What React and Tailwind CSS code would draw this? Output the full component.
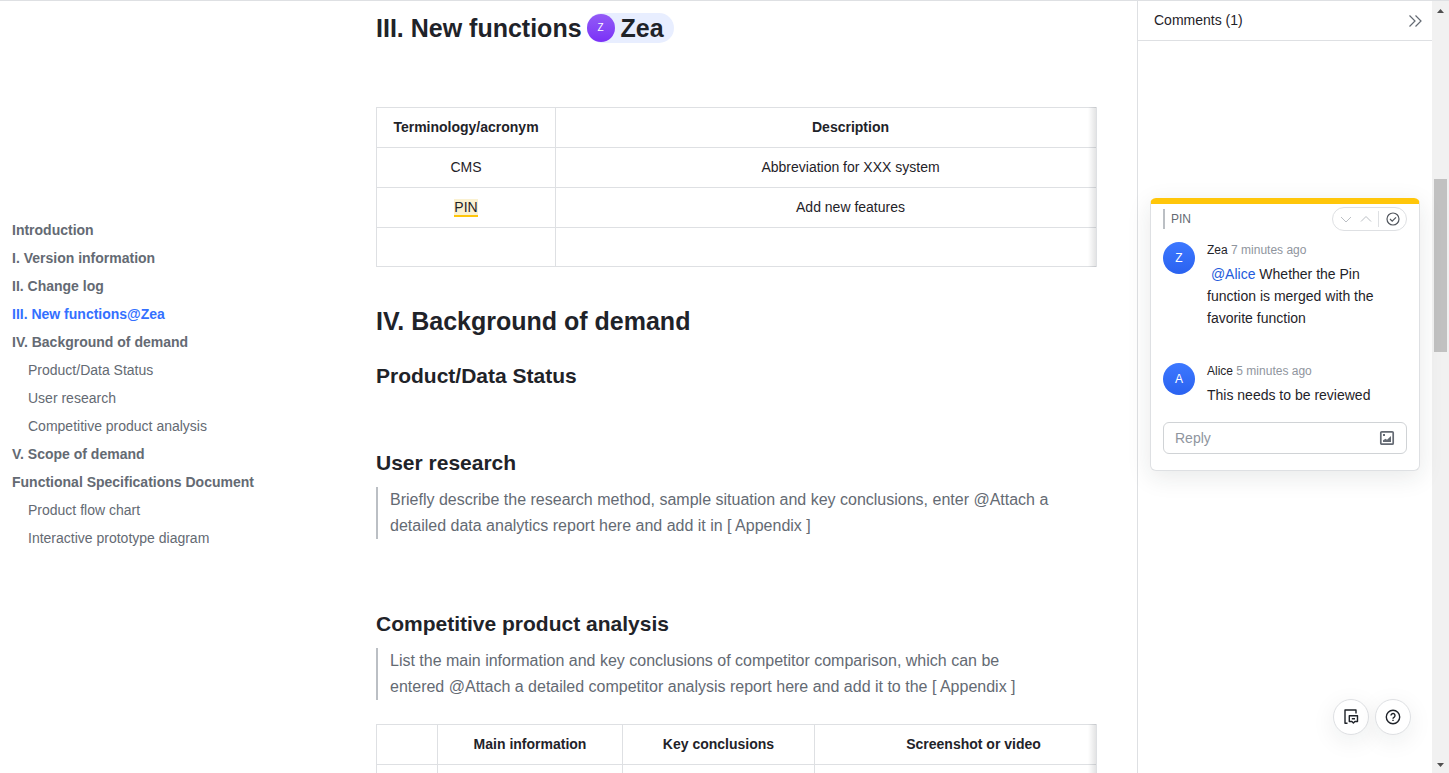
import React from 'react';
import clsx from 'clsx';

const OUTLINE = [
  { label: 'Introduction', level: 1 },
  { label: 'I. Version information', level: 1 },
  { label: 'II. Change log', level: 1 },
  { label: 'III. New functions@Zea', level: 1, active: true },
  { label: 'IV. Background of demand', level: 1 },
  { label: 'Product/Data Status', level: 2 },
  { label: 'User research', level: 2 },
  { label: 'Competitive product analysis', level: 2 },
  { label: 'V. Scope of demand', level: 1 },
  { label: 'Functional Specifications Document', level: 1 },
  { label: 'Product flow chart', level: 2 },
  { label: 'Interactive prototype diagram', level: 2 },
];

const Outline = () => (
  <nav aria-label="Outline" className="w-[376px] shrink-0 flex flex-col justify-center pb-1.5 pl-3">
    {OUTLINE.map(({ label, level, active }) => (
      <a
        key={label}
        href="#"
        className={clsx(
          'text-sm leading-7',
          level === 1 ? 'font-bold' : 'pl-4',
          active ? 'text-[#3370ff]' : 'text-[#646a73]'
        )}
      >
        {label}
      </a>
    ))}
  </nav>
);

/* Wide table that is cut off by the document column, with a fade on the right */
const WideTable = ({ children, className }) => (
  <div className={clsx('relative overflow-hidden border-r border-[#dee0e3]', className)}>
    {children}
    <div className="absolute inset-y-0 right-0 w-2 bg-linear-to-r from-transparent to-[#1f232920]" />
  </div>
);

const cell = 'h-10 border border-[#dee0e3] p-0 pb-0.5 text-center text-sm';
const lastCell = 'h-[39px] border border-[#dee0e3] p-0';

const TermTable = () => (
  <WideTable className="mt-[61px]">
    <table className="w-[770px] table-fixed border-collapse">
      <colgroup>
        <col className="w-[179px]" />
        <col />
      </colgroup>
      <thead>
        <tr>
          <th className={cell}>Terminology/acronym</th>
          <th className={cell}>Description</th>
        </tr>
      </thead>
      <tbody>
        <tr>
          <td className={cell}>CMS</td>
          <td className={cell}>Abbreviation for XXX system</td>
        </tr>
        <tr>
          <td className={cell}>
            <span className="border-b-2 border-[#ffc60a] bg-[#faf1d1]">PIN</span>
          </td>
          <td className={cell}>Add new features</td>
        </tr>
        <tr>
          <td className={lastCell}></td>
          <td className={lastCell}></td>
        </tr>
      </tbody>
    </table>
  </WideTable>
);

const CompetitorTable = () => (
  <WideTable className="mt-6">
    <table className="w-[757px] table-fixed border-collapse">
      <colgroup>
        <col className="w-[61px]" />
        <col className="w-[185px]" />
        <col className="w-[192px]" />
        <col />
      </colgroup>
      <thead>
        <tr>
          <th className={cell}></th>
          <th className={cell}>Main information</th>
          <th className={cell}>Key conclusions</th>
          <th className={cell}>Screenshot or video</th>
        </tr>
      </thead>
      <tbody>
        <tr>
          <td className={cell}></td>
          <td className={cell}></td>
          <td className={cell}></td>
          <td className={cell}></td>
        </tr>
      </tbody>
    </table>
  </WideTable>
);

const Quote = ({ children }) => (
  <blockquote className="mt-2 border-l-2 border-[#bbbfc4] pl-3 text-base leading-[26px] text-[#646a73]">
    {children}
  </blockquote>
);

const Document = () => (
  <main className="min-w-0 flex-1 overflow-hidden pr-10">
    <h1 className="mt-[9px] flex items-center text-[25px] leading-9 font-bold">
      III. New functions
      <a href="#" className="ml-[5px] flex h-[30px] items-center rounded-full bg-[#e8eeff] pr-2.5">
        <span className="mr-1.5 flex size-7 items-center justify-center rounded-full bg-linear-to-b from-[#935af6] to-[#7b2ff7] text-[10px] font-normal text-white">
          Z
        </span>
        Zea
      </a>
    </h1>
    <TermTable />
    <h1 className="mt-9 text-[25px] leading-9 font-bold">IV. Background of demand</h1>
    <h2 className="mt-[21px] text-[21px] leading-8 font-bold">Product/Data Status</h2>
    <h2 className="mt-[55px] text-[21px] leading-8 font-bold">User research</h2>
    <Quote>
      Briefly describe the research method, sample situation and key conclusions, enter @Attach a
      <br />
      detailed data analytics report here and add it in [ Appendix ]
    </Quote>
    <h2 className="mt-[69px] text-[21px] leading-8 font-bold">Competitive product analysis</h2>
    <Quote>
      List the main information and key conclusions of competitor comparison, which can be
      <br />
      entered @Attach a detailed competitor analysis report here and add it to the [ Appendix ]
    </Quote>
    <CompetitorTable />
  </main>
);

const Comment = ({ name, time, className, children }) => (
  <div className={clsx('flex gap-3', className)}>
    <div className="mt-0.5 flex size-8 shrink-0 items-center justify-center rounded-full bg-linear-to-b from-[#3d78ff] to-[#2a62f0] text-xs text-white">
      {name[0]}
    </div>
    <div>
      <div className="text-xs leading-5">
        {name} <span className="text-[#8f959e]">{time}</span>
      </div>
      <p className="mt-[3px] text-sm leading-[22px]">{children}</p>
    </div>
  </div>
);

const CommentCard = () => (
  <section className="mx-3 mt-[157px] rounded-md border border-t-6 border-[#dee0e3] border-t-[#ffc60a] bg-white px-3 pt-[3px] pb-4 shadow-[0_6px_24px_rgba(31,35,41,0.10)]">
    <div className="flex items-center justify-between">
      <div className="border-l-2 border-[#bbbfc4] pl-1.5 text-xs leading-5 text-[#646a73]">PIN</div>
      <div className="flex h-6 items-center rounded-full border border-[#dee0e3] pr-[5px] pl-[7px]">
        <button aria-label="Next comment" className="text-[#bbbfc4]">
          <svg className="h-3 w-3" viewBox="0 0 12 12" fill="none" stroke="currentColor">
            <path d="M1 4l5 5 5-5" />
          </svg>
        </button>
        <button aria-label="Previous comment" className="ml-2 text-[#bbbfc4]">
          <svg className="h-3 w-3" viewBox="0 0 12 12" fill="none" stroke="currentColor">
            <path d="M1 8.500l5-5 5 5" />
          </svg>
        </button>
        <span className="mx-1.5 h-4 border-l border-[#dee0e3]" />
        <button aria-label="Resolve" className="text-[#51565d]">
          <svg className="size-4" viewBox="0 0 16 16" fill="none" stroke="currentColor" strokeWidth="1.2">
            <circle cx="8" cy="8" r="6" />
            <path d="M5 8l2.200 2.200L11 6.300" />
          </svg>
        </button>
      </div>
    </div>
    <Comment name="Zea" time="7 minutes ago" className="mt-[9px]">
      &nbsp;<a href="#" className="text-[#245bdb]">@Alice</a> Whether the Pin
      <br />
      function is merged with the
      <br />
      favorite function
    </Comment>
    <Comment name="Alice" time="5 minutes ago" className="mt-8">
      This needs to be reviewed
    </Comment>
    <div className="mt-4 flex h-8 items-center rounded-md border border-[#d0d3d6] px-[11px]">
      <input
        type="text"
        aria-label="Reply"
        placeholder="Reply"
        className="min-w-0 flex-1 text-sm outline-none placeholder:text-[#8f959e]"
      />
      <button aria-label="Insert image" className="text-[#646a73]">
        <svg className="size-4" viewBox="0 0 16 16" fill="none">
          <rect x="1.800" y="1.800" width="12.400" height="12.400" rx="1" stroke="currentColor" strokeWidth="1.700" />
          <rect x="4" y="4" width="2" height="2" fill="currentColor" />
          <path d="M4 12v-1.800l2.500-1.400 1.500 1L12 6v6z" fill="currentColor" />
        </svg>
      </button>
    </div>
  </section>
);

const fab =
  'flex size-9 items-center justify-center rounded-full border border-[#dee0e3] bg-white shadow-[0_6px_24px_rgba(31,35,41,0.08)]';

const CommentsPanel = () => (
  <aside className="relative w-[295px] shrink-0 border-l border-[#dee0e3]">
    <header className="flex h-10 items-center justify-between border-b border-[#dee0e3] pr-2 pl-4">
      <h2 className="pb-0.5 text-sm">Comments (1)</h2>
      <button aria-label="Collapse comments" className="text-[#646a73]">
        <svg className="size-4" viewBox="0 0 16 16" fill="none" stroke="currentColor" strokeWidth="1.200">
          <path d="M1.500 2.500L7 8l-5.500 5.500M7.500 2.500L13 8l-5.500 5.500" />
        </svg>
      </button>
    </header>
    <CommentCard />
    <div className="absolute right-[21px] bottom-[38px] flex gap-1.5">
      <button aria-label="Document comments" className={fab}>
        <svg className="size-4" viewBox="0 0 16 16" fill="none" stroke="currentColor" strokeWidth="1.400" strokeLinejoin="round">
          <path d="M4.500 14.200H2V1h11v3.500" />
          <path d="M6.300 6.800h8.200v5.700h-2.600l-1.500 1.500-1.500-1.500H6.300zM8.800 9.700h3.200" />
        </svg>
      </button>
      <button aria-label="Help" className={fab}>
        <svg className="size-4" viewBox="0 0 16 16" fill="none" stroke="currentColor" strokeWidth="1.400">
          <circle cx="8" cy="8" r="6.700" />
          <path d="M6 6.500a2 2 0 1 1 3.200 1.600C8.400 8.600 8 8.900 8 9.700M8 10.800v1.300" />
        </svg>
      </button>
    </div>
  </aside>
);

const Scrollbar = () => (
  <div aria-hidden="true" className="flex w-[17px] shrink-0 flex-col items-center bg-[#f1f1f1] pt-2 pb-1.5">
    <svg className="h-1 w-[7px]" viewBox="0 0 7 4" fill="#505050">
      <path d="M0 4L3.500 0 7 4z" />
    </svg>
    <div className="mt-[166px] h-[173px] w-[13px] bg-[#c1c1c1]" />
    <svg className="mt-auto h-1 w-[7px]" viewBox="0 0 7 4" fill="#505050">
      <path d="M0 0l3.500 4L7 0z" />
    </svg>
  </div>
);

export default function App() {
  return (
    <div className="flex h-screen overflow-hidden border-t border-[#dee0e3] bg-white font-['Liberation_Sans',Arial,sans-serif] text-[#1f2329]">
      <Outline />
      <Document />
      <CommentsPanel />
      <Scrollbar />
    </div>
  );
}
